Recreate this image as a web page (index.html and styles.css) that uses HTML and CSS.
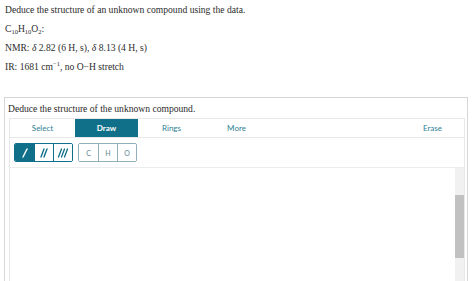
FILE: index.html
```html
<!DOCTYPE html>
<html lang="en">
<head>
  <meta charset="UTF-8">
  <title>Unknown Compound</title>
  <link rel="stylesheet" href="styles.css">
</head>
<body>
<div class="question">
  <p>Deduce the structure of an unknown compound using the data.</p>
  <p>C<sub>10</sub>H<sub>10</sub>O<sub>2</sub>:</p>
  <p>NMR: <i>δ</i> 2.82 (6 H, s), <i>δ</i> 8.13 (4 H, s)</p>
  <p>IR: 1681 cm<sup>−1</sup>, no O−H stretch</p>
</div>

<div class="answer-box">
  <p class="prompt">Deduce the structure of the unknown compound.</p>
  <div class="editor">
    <div class="tabs">
      <span class="tab tab-select">Select</span>
      <span class="tab tab-draw active">Draw</span>
      <span class="tab tab-rings">Rings</span>
      <span class="tab tab-more">More</span>
      <span class="spacer"></span>
      <span class="tab tab-erase">Erase</span>
    </div>
    <div class="tools">
      <div class="group bonds">
        <button class="tool on">
          <svg width="10" height="10" viewBox="0 0 10 10"><path d="M3 9 L7 1" stroke="#fff" stroke-width="1.4" stroke-linecap="round"/></svg>
        </button>
        <button class="tool">
          <svg width="10" height="10" viewBox="0 0 10 10"><path d="M2 9 L5 1 M5 9 L8 1" stroke="#10708a" stroke-width="1.4" stroke-linecap="round"/></svg>
        </button>
        <button class="tool">
          <svg width="12" height="10" viewBox="0 0 12 10"><path d="M1.5 9 L4.5 1 M4.5 9 L7.5 1 M7.5 9 L10.5 1" stroke="#10708a" stroke-width="1.3" stroke-linecap="round"/></svg>
        </button>
      </div>
      <div class="group atoms">
        <button class="tool atom">C</button>
        <button class="tool atom">H</button>
        <button class="tool atom">O</button>
      </div>
    </div>
    <div class="canvas">
      <div class="scrollbar"><div class="thumb"></div></div>
    </div>
  </div>
</div>
</body>
</html>
```

FILE: styles.css
```css
body { margin: 0; font-family: "Liberation Serif", "Times New Roman", serif; font-size: 9.6px; color: #2b2b2b; background: #fff; }
p { margin: 0; }

.question { padding-left: 5px; }
.question p { line-height: 19px; }
sub { font-size: 6.5px; line-height: 0; vertical-align: -2px; }
sup { font-size: 6.5px; line-height: 0; vertical-align: 4px; }

.answer-box {
  margin: 21px 6px 0 4px;
  border: 1px solid #d6d6d6;
  border-bottom: none;
  height: 200px;
}
.prompt { line-height: 19px; padding-left: 3px; padding-top: 1px; }

.editor {
  margin: 0 2px 0 4px;
  border: 1px solid #e8e8e8;
  border-bottom: none;
}

/* tab bar */
.tabs {
  display: flex;
  height: 18px;
  border-bottom: 1px solid #e8e8e8;
}
.tab {
  display: flex;
  align-items: center;
  justify-content: center;
  font-family: Lato, "Open Sans", sans-serif;
  font-size: 8px;
  color: #2f7f96;
}
.tab-select { width: 65px; }
.tab-draw { width: 63px; }
.tab-rings { width: 67px; }
.tab-more { width: 63px; }
.tab-erase { width: 63px; }
.spacer { flex: 1; }
.tab.active { background: #10708a; color: #fff; font-weight: bold; }

/* tool buttons */
.tools {
  display: flex;
  gap: 5px;
  padding: 5px 4px 5px 4px;
  border-bottom: 1px solid #ececec;
}
.group {
  display: flex;
  border: 1px solid #10708a;
  border-radius: 2px;
  overflow: hidden;
}
.group.atoms { border-color: #8fb0ba; }
.tool {
  width: 19px;
  height: 17px;
  padding: 0;
  margin: 0;
  border: none;
  background: #fff;
  display: flex;
  align-items: center;
  justify-content: center;
}
.tool + .tool { border-left: 1px solid #10708a; }
.atoms .tool + .tool { border-left-color: #8fb0ba; }
.tool.on { background: #10708a; }
.tool.atom { font-family: Lato, sans-serif; font-size: 7px; color: #5d8794; }

/* drawing canvas */
.canvas {
  height: 140px;
  display: flex;
  justify-content: flex-end;
}
.scrollbar { width: 9px; background: #f1f1f1; }
.thumb { margin-top: 27px; height: 63px; background: #c1c1c1; }
```
